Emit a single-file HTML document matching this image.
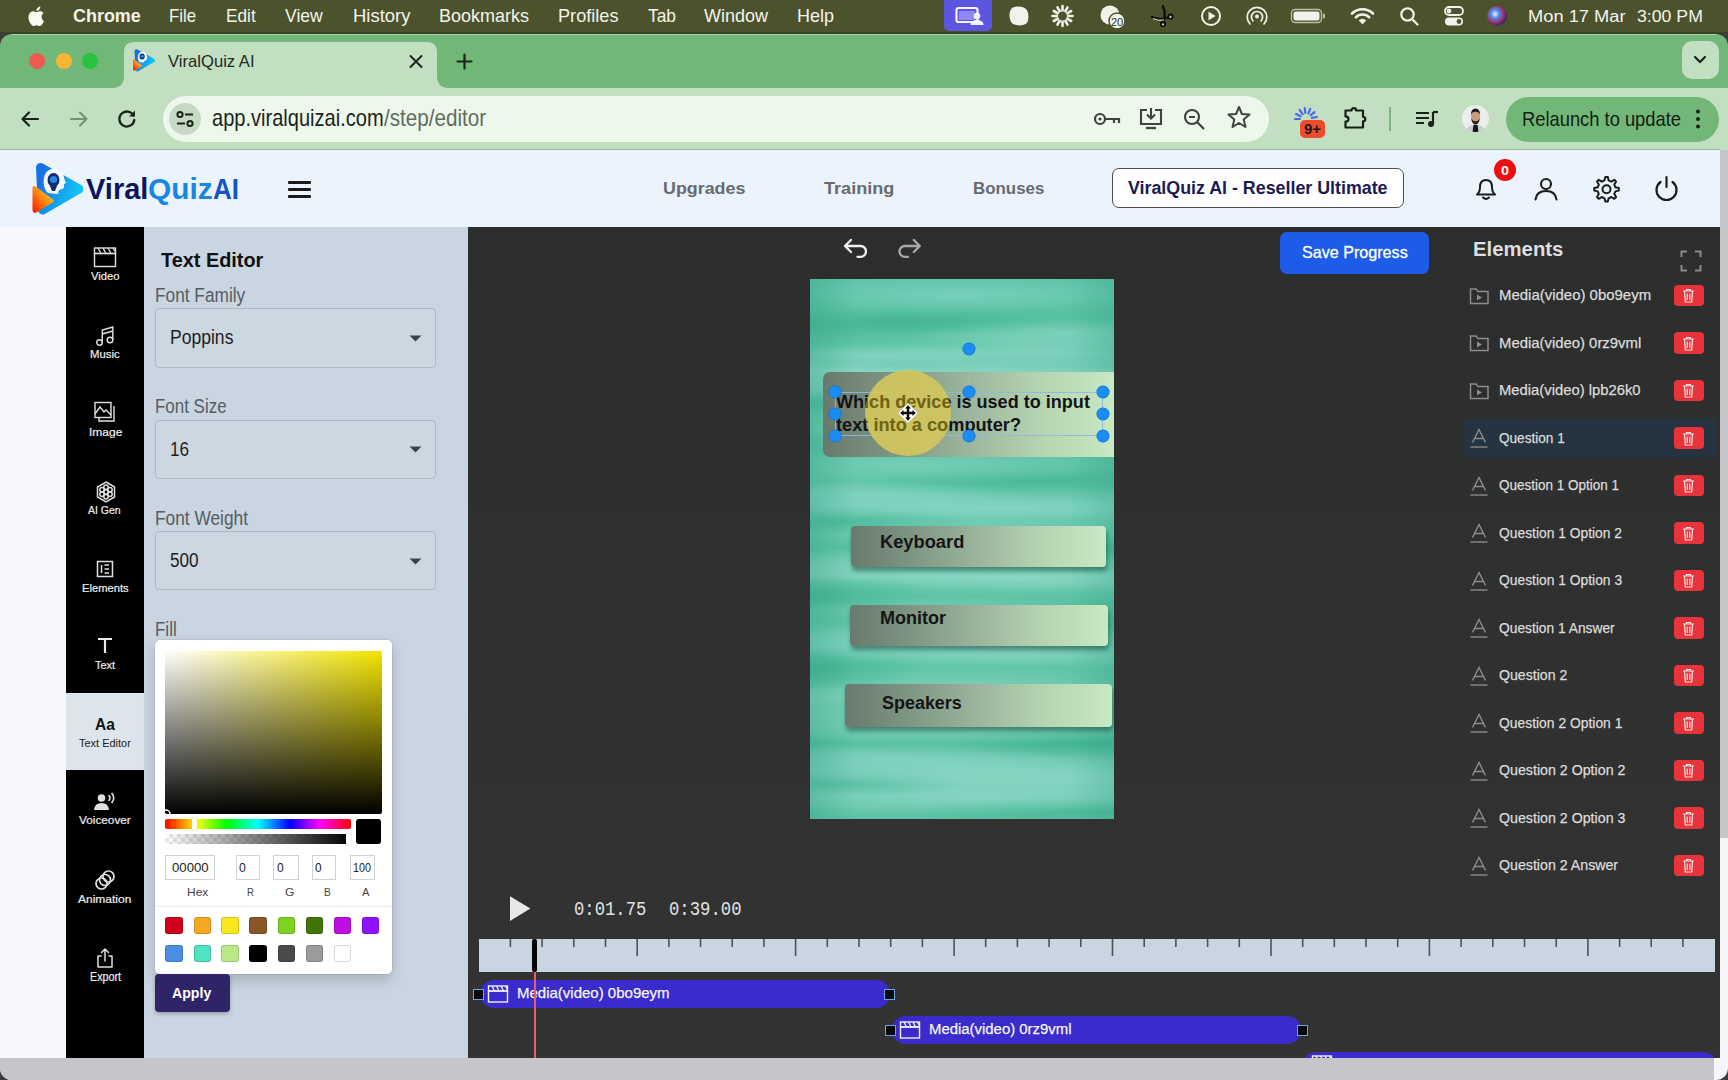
<!DOCTYPE html><html><head><meta charset="utf-8"><style>html,body{margin:0;padding:0;}body{width:1728px;height:1080px;overflow:hidden;position:relative;background:#3c3c3a;font-family:"Liberation Sans",sans-serif;}</style></head><body>
<div style="position:absolute;left:0px;top:0px;width:1728px;height:34px;background:#39412a;"></div>
<div style="position:absolute;left:0px;top:0px;width:1728px;height:32px;background:#4c532c;"></div>
<svg style="position:absolute;left:27px;top:5px;" width="20" height="22" viewBox="0 0 20 22"><path fill="#fafaf2" d="M14.6 11.7c0-2.4 2-3.5 2.1-3.6-1.1-1.7-2.9-1.9-3.5-1.9-1.5-.2-2.9.9-3.7.9-.8 0-1.9-.9-3.2-.8C4.7 6.3 3.1 7.3 2.3 8.8c-1.7 3-.4 7.4 1.2 9.8.8 1.2 1.8 2.5 3 2.4 1.2 0 1.7-.8 3.1-.8s1.9.8 3.2.8c1.3 0 2.1-1.2 2.9-2.4.9-1.3 1.3-2.6 1.3-2.7 0 0-2.4-1-2.4-4.2zM12.3 4.6c.7-.8 1.1-1.9 1-3-1 0-2.1.7-2.8 1.5-.6.7-1.2 1.8-1 2.9 1.1.1 2.1-.6 2.8-1.4z"/></svg>
<span id="t0" style="position:absolute;left:73.20px;top:7.49px;font-size:18.31px;line-height:18.31px;font-family:'Liberation Sans', sans-serif;font-weight:700;color:#f4f4ec;white-space:pre;transform:scaleX(0.9806);transform-origin:0 0;">Chrome</span>
<span id="t1" style="position:absolute;left:169.30px;top:7.49px;font-size:18.31px;line-height:18.31px;font-family:'Liberation Sans', sans-serif;font-weight:400;color:#f4f4ec;white-space:pre;transform:scaleX(0.9191);transform-origin:0 0;">File</span>
<span id="t2" style="position:absolute;left:226.00px;top:7.49px;font-size:18.31px;line-height:18.31px;font-family:'Liberation Sans', sans-serif;font-weight:400;color:#f4f4ec;white-space:pre;transform:scaleX(0.9419);transform-origin:0 0;">Edit</span>
<span id="t3" style="position:absolute;left:285.40px;top:7.49px;font-size:18.31px;line-height:18.31px;font-family:'Liberation Sans', sans-serif;font-weight:400;color:#f4f4ec;white-space:pre;transform:scaleX(0.9611);transform-origin:0 0;">View</span>
<span id="t4" style="position:absolute;left:352.50px;top:7.49px;font-size:18.31px;line-height:18.31px;font-family:'Liberation Sans', sans-serif;font-weight:400;color:#f4f4ec;white-space:pre;transform:scaleX(1.0099);transform-origin:0 0;">History</span>
<span id="t5" style="position:absolute;left:439.00px;top:7.49px;font-size:18.31px;line-height:18.31px;font-family:'Liberation Sans', sans-serif;font-weight:400;color:#f4f4ec;white-space:pre;transform:scaleX(0.9834);transform-origin:0 0;">Bookmarks</span>
<span id="t6" style="position:absolute;left:558.00px;top:7.49px;font-size:18.31px;line-height:18.31px;font-family:'Liberation Sans', sans-serif;font-weight:400;color:#f4f4ec;white-space:pre;transform:scaleX(0.9915);transform-origin:0 0;">Profiles</span>
<span id="t7" style="position:absolute;left:647.50px;top:7.49px;font-size:18.31px;line-height:18.31px;font-family:'Liberation Sans', sans-serif;font-weight:400;color:#f4f4ec;white-space:pre;transform:scaleX(0.9492);transform-origin:0 0;">Tab</span>
<span id="t8" style="position:absolute;left:704.00px;top:7.49px;font-size:18.31px;line-height:18.31px;font-family:'Liberation Sans', sans-serif;font-weight:400;color:#f4f4ec;white-space:pre;transform:scaleX(0.9834);transform-origin:0 0;">Window</span>
<span id="t9" style="position:absolute;left:796.50px;top:7.49px;font-size:18.31px;line-height:18.31px;font-family:'Liberation Sans', sans-serif;font-weight:400;color:#f4f4ec;white-space:pre;transform:scaleX(0.9830);transform-origin:0 0;">Help</span>
<div style="position:absolute;left:944px;top:0px;width:48px;height:31px;background:#5b55e0;border-radius:0 0 5px 5px;"></div>
<svg style="position:absolute;left:955px;top:6px;" width="30" height="20" viewBox="0 0 30 20"><rect x="1.5" y="2" width="21" height="14" rx="2" fill="none" stroke="#f4f2ff" stroke-width="2.2"/><rect x="4" y="5" width="16" height="9" fill="#8f88f0"/><circle cx="22" cy="10" r="3.3" fill="#f4f2ff"/><path d="M15.5 19c0-3.5 3-5 6.5-5s6.5 1.5 6.5 5z" fill="#f4f2ff"/></svg>
<svg style="position:absolute;left:1007px;top:5px;" width="24" height="22" viewBox="0 0 24 22"><path d="M5 3c4-2 10-2 14 1 3 3 3 10 1 14-3 3-10 3-14 1-4-3-5-12-1-16z" fill="#f2f2ea"/></svg>
<svg style="position:absolute;left:1050px;top:4px;" width="25" height="24" viewBox="0 0 25 24"><g stroke="#f2f2ea" stroke-width="2.6" stroke-linecap="round"><line x1="12.5" y1="12" x2="22.50" y2="12.00"/><line x1="12.5" y1="12" x2="21.16" y2="17.00"/><line x1="12.5" y1="12" x2="17.50" y2="20.66"/><line x1="12.5" y1="12" x2="12.50" y2="22.00"/><line x1="12.5" y1="12" x2="7.50" y2="20.66"/><line x1="12.5" y1="12" x2="3.84" y2="17.00"/><line x1="12.5" y1="12" x2="2.50" y2="12.00"/><line x1="12.5" y1="12" x2="3.84" y2="7.00"/><line x1="12.5" y1="12" x2="7.50" y2="3.34"/><line x1="12.5" y1="12" x2="12.50" y2="2.00"/><line x1="12.5" y1="12" x2="17.50" y2="3.34"/><line x1="12.5" y1="12" x2="21.16" y2="7.00"/></g><circle cx="12.5" cy="12" r="4.5" fill="#4c532c"/></svg>
<svg style="position:absolute;left:1099px;top:4px;" width="30" height="26" viewBox="0 0 30 26"><circle cx="11" cy="11" r="9.5" fill="#f2f2ea"/><circle cx="18" cy="17" r="8" fill="#f2f2ea" stroke="#4c532c" stroke-width="1.5"/><text x="18" y="21.5" font-size="11" text-anchor="middle" font-family="Liberation Sans" fill="#333">20</text></svg>
<svg style="position:absolute;left:1150px;top:4px;" width="26" height="26" viewBox="0 0 26 26"><path d="M13 2 Q15.5 8 14.5 14 L13.5 17" fill="none" stroke="#0c0c08" stroke-width="2.2" stroke-linecap="round"/><path d="M2 13 Q7 15.5 14 14.5 L18 13.5" fill="none" stroke="#0c0c08" stroke-width="2.2" stroke-linecap="round"/><circle cx="20.5" cy="12.5" r="2.2" fill="none" stroke="#0c0c08" stroke-width="1.8"/><circle cx="13" cy="20" r="2.2" fill="none" stroke="#0c0c08" stroke-width="1.8"/><circle cx="20.5" cy="13" r="1" fill="#e8e8d8"/><circle cx="13" cy="20.5" r="1" fill="#e8e8d8"/><path d="M3 14.5 Q8 17 14 16" fill="none" stroke="#e8e8d8" stroke-width="1"/></svg>
<svg style="position:absolute;left:1200px;top:5px;" width="24" height="22" viewBox="0 0 24 22"><circle cx="11" cy="11" r="9" fill="none" stroke="#f2f2ea" stroke-width="2"/><path d="M8.5 6.5 L15.5 11 L8.5 15.5z" fill="#f2f2ea"/></svg>
<svg style="position:absolute;left:1245px;top:4px;" width="24" height="24" viewBox="0 0 24 24"><g fill="none" stroke="#f2f2ea" stroke-width="1.7" stroke-linecap="round"><path d="M5 20 A9.8 9.8 0 1 1 19 20"/><path d="M8 17 A5.6 5.6 0 1 1 16 17"/></g><circle cx="12" cy="12.5" r="2" fill="#f2f2ea"/></svg>
<svg style="position:absolute;left:1290px;top:8px;" width="38" height="17" viewBox="0 0 38 17"><rect x="1.5" y="1.5" width="30" height="13" rx="3.5" fill="none" stroke="#b9bca8" stroke-width="1.4"/><rect x="3.5" y="3.5" width="26" height="9" rx="2" fill="#f2f2ea"/><rect x="33" y="5.5" width="2" height="5" rx="1" fill="#b9bca8"/></svg>
<svg style="position:absolute;left:1350px;top:6px;" width="25" height="20" viewBox="0 0 25 20"><g fill="none" stroke="#f2f2ea" stroke-width="2.6" stroke-linecap="round"><path d="M2 7.5a15 15 0 0 1 21 0"/><path d="M5.8 11.3a9.5 9.5 0 0 1 13.4 0"/></g><path d="M8.8 14.5a5 5 0 0 1 7.4 0L12.5 18.5z" fill="#f2f2ea"/></svg>
<svg style="position:absolute;left:1399px;top:6px;" width="22" height="22" viewBox="0 0 22 22"><circle cx="8.5" cy="8.5" r="6.2" fill="none" stroke="#f2f2ea" stroke-width="2.2"/><path d="M13 13 L18.5 18.5" stroke="#f2f2ea" stroke-width="2.4" stroke-linecap="round"/></svg>
<svg style="position:absolute;left:1443px;top:5px;" width="24" height="24" viewBox="0 0 24 24"><rect x="2" y="2" width="18" height="8" rx="4" fill="none" stroke="#f2f2ea" stroke-width="1.8"/><circle cx="6" cy="6" r="2.4" fill="#f2f2ea"/><rect x="2" y="12.5" width="18" height="8" rx="4" fill="#f2f2ea"/><circle cx="16" cy="16.5" r="2.4" fill="#4c532c"/></svg>
<svg style="position:absolute;left:1486px;top:5px;" width="22" height="22" viewBox="0 0 22 22"><defs><radialGradient id="siri" cx="40%" cy="40%" r="60%"><stop offset="0" stop-color="#e8f0ff"/><stop offset=".35" stop-color="#4a8ee8"/><stop offset=".7" stop-color="#a03070"/><stop offset="1" stop-color="#3a2a6a"/></radialGradient></defs><circle cx="11" cy="11" r="10" fill="url(#siri)"/></svg>
<span id="t10" style="position:absolute;left:1528.30px;top:7.86px;font-size:17.30px;line-height:17.30px;font-family:'Liberation Sans', sans-serif;font-weight:400;color:#f4f4ec;white-space:pre;transform:scaleX(1.0584);transform-origin:0 0;">Mon 17 Mar</span>
<span id="t11" style="position:absolute;left:1636.80px;top:7.86px;font-size:17.30px;line-height:17.30px;font-family:'Liberation Sans', sans-serif;font-weight:400;color:#f4f4ec;white-space:pre;transform:scaleX(1.0239);transform-origin:0 0;">3:00 PM</span>
<div style="position:absolute;left:0px;top:34px;width:1728px;height:1024px;background:#72b777;border-radius:12px 12px 0 0;"></div>
<div style="position:absolute;left:12px;top:34px;width:1704px;height:1px;background:rgba(170,225,170,.8);"></div>
<div style="position:absolute;left:28.5px;top:53px;width:16px;height:16px;border-radius:50%;background:#ee5a52;"></div>
<div style="position:absolute;left:55.5px;top:53px;width:16px;height:16px;border-radius:50%;background:#f5b732;"></div>
<div style="position:absolute;left:82px;top:53px;width:16px;height:16px;border-radius:50%;background:#28c33e;"></div>
<svg style="position:absolute;left:112px;top:42px;" width="340" height="46" viewBox="0 0 340 46"><path d="M0 46 Q12 46 12 34 V10 Q12 0 22 0 H315 Q325 0 325 10 V34 Q325 46 337 46 Z" fill="#c2dfc2"/></svg>
<svg style="position:absolute;left:131px;top:47px;" width="27" height="26" viewBox="4 2 62 60"><defs><linearGradient id="flb" x1="0" y1="0.2" x2="1" y2="0.6"><stop offset="0" stop-color="#1670e6"/><stop offset="1" stop-color="#12c6f2"/></linearGradient><linearGradient id="flo" x1="1" y1="0" x2="0" y2="1"><stop offset="0" stop-color="#ffe61a"/><stop offset=".5" stop-color="#ff8a10"/><stop offset="1" stop-color="#ff1200"/></linearGradient></defs><path d="M16.5 11.5 L55 33 L18.5 54z" fill="url(#flb)" stroke="url(#flb)" stroke-width="9" stroke-linejoin="round"/><path d="M24 37 C20 33 19 27 20 22 C21 15 27 12 32 13 C37 14 40 18 40 22 L42 27 L40 28 L40 31 C40 33 37 33 35 34 L34 38z" fill="#f6f9ff"/><ellipse cx="29.5" cy="24" rx="6" ry="7" fill="#0b2c70"/><circle cx="29.5" cy="23.5" r="3.6" fill="#2a86e2"/><path d="M11 30 Q8 29.5 8.5 33 L8.5 54 Q9 58.5 13 56 L28.5 46.5 Q31 45 28.5 43.3z" fill="url(#flo)"/></svg>
<span id="t12" style="position:absolute;left:168.00px;top:54.37px;font-size:16.57px;line-height:16.57px;font-family:'Liberation Sans', sans-serif;font-weight:400;color:#1d2a1e;white-space:pre;transform:scaleX(1.0042);transform-origin:0 0;">ViralQuiz AI</span>
<svg style="position:absolute;left:408px;top:54px;" width="16" height="15" viewBox="0 0 16 15"><path d="M2.5 2 L13.5 13 M13.5 2 L2.5 13" stroke="#1b241b" stroke-width="2" stroke-linecap="round"/></svg>
<svg style="position:absolute;left:456px;top:53px;" width="17" height="17" viewBox="0 0 17 17"><path d="M8.5 1.5 V15.5 M1.5 8.5 H15.5" stroke="#1b241b" stroke-width="2.2" stroke-linecap="round"/></svg>
<div style="position:absolute;left:1682px;top:41px;width:37px;height:38px;background:#c2dfc2;border-radius:10px;"></div>
<svg style="position:absolute;left:1691px;top:53px;" width="18" height="14" viewBox="0 0 18 14"><path d="M4 4 L9 9 L14 4" fill="none" stroke="#1b241b" stroke-width="2.2" stroke-linecap="round" stroke-linejoin="round"/></svg>
<div style="position:absolute;left:0px;top:88px;width:1728px;height:62px;background:#c2dfc2;"></div>
<div style="position:absolute;left:0px;top:149px;width:1720px;height:1px;background:#9fb99f;"></div>
<svg style="position:absolute;left:19px;top:108px;" width="22" height="22" viewBox="0 0 22 22"><path d="M19 11 H4 M10 4.5 L3.5 11 L10 17.5" fill="none" stroke="#1b241b" stroke-width="2.2" stroke-linecap="round" stroke-linejoin="round"/></svg>
<svg style="position:absolute;left:68px;top:108px;" width="22" height="22" viewBox="0 0 22 22"><path d="M3 11 H18 M12 4.5 L18.5 11 L12 17.5" fill="none" stroke="#6f936f" stroke-width="2.1" stroke-linecap="round" stroke-linejoin="round"/></svg>
<svg style="position:absolute;left:116px;top:107px;" width="22" height="22" viewBox="0 0 22 22"><path d="M17.5 8.5 A7.5 7.5 0 1 0 18.3 13" fill="none" stroke="#1b241b" stroke-width="2.3" stroke-linecap="round"/><path d="M19 3.5 V9.5 H13z" fill="#1b241b"/></svg>
<div style="position:absolute;left:163px;top:96px;width:1106px;height:46px;background:#eef7eb;border-radius:23px;"></div>
<div style="position:absolute;left:169px;top:103px;width:32px;height:32px;background:#c5d9c3;border-radius:50%;"></div>
<svg style="position:absolute;left:173px;top:107px;" width="24" height="24" viewBox="0 0 24 24"><g fill="none" stroke="#1b241b" stroke-width="2"><circle cx="7" cy="7.5" r="2.6"/><circle cx="17" cy="16.5" r="2.6"/><path d="M12 7.5 H20 M4 16.5 H12"/></g></svg>
<span id="t13" style="position:absolute;left:212.40px;top:107.49px;font-size:23.40px;line-height:23.40px;font-family:'Liberation Sans', sans-serif;font-weight:400;color:#1b241b;white-space:pre;transform:scaleX(0.8571);transform-origin:0 0;">app.viralquizai.com</span>
<span id="t14" style="position:absolute;left:384.00px;top:107.49px;font-size:23.40px;line-height:23.40px;font-family:'Liberation Sans', sans-serif;font-weight:400;color:#5f6e5f;white-space:pre;transform:scaleX(0.8831);transform-origin:0 0;">/step/editor</span>
<svg style="position:absolute;left:1093px;top:108px;" width="30" height="22" viewBox="0 0 30 22"><circle cx="7" cy="11" r="5" fill="none" stroke="#3a463a" stroke-width="2.2"/><circle cx="7" cy="11" r="1.6" fill="#3a463a"/><path d="M12 11 H26 V15 M21 11 V15" fill="none" stroke="#3a463a" stroke-width="2.2"/></svg>
<svg style="position:absolute;left:1138px;top:105px;" width="28" height="28" viewBox="0 0 28 28"><path d="M9 5 H3 V19 H23 V5 H17" fill="none" stroke="#3a463a" stroke-width="2.1"/><path d="M13 3 V13 M9 9.5 L13 13.5 L17 9.5" fill="none" stroke="#3a463a" stroke-width="2.1"/><path d="M8 23 H18" stroke="#3a463a" stroke-width="2.3"/></svg>
<svg style="position:absolute;left:1181px;top:106px;" width="28" height="28" viewBox="0 0 28 28"><circle cx="11" cy="11" r="7" fill="none" stroke="#3a463a" stroke-width="2.1"/><path d="M8 11 H14 M16 16 L23 23" stroke="#3a463a" stroke-width="2.2"/></svg>
<svg style="position:absolute;left:1225px;top:104px;" width="28" height="28" viewBox="0 0 28 28"><path d="M14 3 L16.9 10 L24.5 10.6 L18.7 15.5 L20.5 23 L14 19 L7.5 23 L9.3 15.5 L3.5 10.6 L11.1 10z" fill="none" stroke="#3a463a" stroke-width="2" stroke-linejoin="round"/></svg>
<svg style="position:absolute;left:1292px;top:104px;" width="36" height="36" viewBox="0 0 36 36"><g stroke="#4a6ae8" stroke-width="2.2" stroke-linecap="round"><line x1="8.0" y1="15.0" x2="3.0" y2="15.0"/><line x1="8.6" y1="12.3" x2="4.1" y2="10.1"/><line x1="10.6" y1="10.1" x2="7.7" y2="6.0"/><line x1="13.3" y1="9.0" x2="12.8" y2="4.1"/><line x1="16.3" y1="9.4" x2="18.2" y2="4.8"/><line x1="18.7" y1="11.2" x2="22.5" y2="8.1"/><line x1="19.9" y1="13.9" x2="24.8" y2="13.0"/></g></svg>
<div style="position:absolute;left:1300px;top:120px;width:25px;height:18px;background:#ef4a2a;border-radius:5px;"></div>
<span id="t15" style="position:absolute;left:1304.00px;top:121.69px;font-size:14.53px;line-height:14.53px;font-family:'Liberation Sans', sans-serif;font-weight:700;color:#1a1a1a;white-space:pre;transform:scaleX(1.0264);transform-origin:0 0;">9+</span>
<svg style="position:absolute;left:1341px;top:103px;" width="30" height="30" viewBox="0 0 30 30"><path d="M4.5 7.5 H10.5 A2.3 2.3 0 0 1 15.1 7.5 H22 V13.8 A2.3 2.3 0 0 1 22 18.4 V24.5 H4.5 V18.6 Q7.5 18.6 7.5 16 Q7.5 13.4 4.5 13.4 Z" fill="none" stroke="#152015" stroke-width="2.2" stroke-linejoin="round"/></svg>
<div style="position:absolute;left:1389px;top:107px;width:2px;height:24px;background:#7fb47f;"></div>
<svg style="position:absolute;left:1414px;top:108px;" width="28" height="22" viewBox="0 0 28 22"><path d="M2 5 H15 M2 10 H15 M2 15 H10" stroke="#1b241b" stroke-width="2.2"/><path d="M19 4 V16" stroke="#1b241b" stroke-width="2.2"/><path d="M19 4 H24" stroke="#1b241b" stroke-width="2.2"/><circle cx="17" cy="16" r="3" fill="#1b241b"/></svg>
<div style="position:absolute;left:1462px;top:105px;width:27px;height:27px;background:#d8dcd8;border-radius:50%;overflow:hidden;"></div>
<svg style="position:absolute;left:1462px;top:105px;border-radius:50%;" width="27" height="27" viewBox="0 0 27 27"><rect width="27" height="27" fill="#eceeed"/><path d="M3 27 Q5 20 13.5 19.5 Q22 20 24 27z" fill="#c9cdd0"/><path d="M10.5 27 L11.5 20 H15.5 L16.5 27z" fill="#151515"/><ellipse cx="13.5" cy="12" rx="4.6" ry="6" fill="#c79a7c"/><path d="M8.8 10 Q9 3.5 13.5 3.5 Q18 3.5 18.2 10 Q16.5 6.5 13.5 6.8 Q10.5 6.5 8.8 10z" fill="#1d1a18"/><path d="M9.2 13.5 Q10 19.5 13.5 19.5 Q17 19.5 17.8 13.5 Q16 16.5 13.5 16.2 Q11 16.5 9.2 13.5z" fill="#2a2220"/></svg>
<div style="position:absolute;left:1506px;top:97px;width:213px;height:45px;background:#72b777;border-radius:23px;"></div>
<span id="t16" style="position:absolute;left:1521.70px;top:109.40px;font-size:20.78px;line-height:20.78px;font-family:'Liberation Sans', sans-serif;font-weight:400;color:#132013;white-space:pre;transform:scaleX(0.8828);transform-origin:0 0;">Relaunch to update</span>
<svg style="position:absolute;left:1693px;top:108px;" width="10" height="22" viewBox="0 0 10 22"><circle cx="5" cy="3.5" r="2" fill="#132013"/><circle cx="5" cy="11" r="2" fill="#132013"/><circle cx="5" cy="18.5" r="2" fill="#132013"/></svg>
<div style="position:absolute;left:0px;top:150px;width:1720px;height:77px;background:#ebf3fc;"></div>
<svg style="position:absolute;left:24px;top:156px;" width="68" height="64" viewBox="0 0 68 64"><defs><linearGradient id="lgb" x1="0" y1="0.2" x2="1" y2="0.6"><stop offset="0" stop-color="#1670e6"/><stop offset="1" stop-color="#12c6f2"/></linearGradient><linearGradient id="lgo" x1="1" y1="0" x2="0" y2="1"><stop offset="0" stop-color="#ffe61a"/><stop offset=".5" stop-color="#ff8a10"/><stop offset="1" stop-color="#ff1200"/></linearGradient></defs><path d="M16.5 11.5 L55 33 L18.5 54z" fill="url(#lgb)" stroke="url(#lgb)" stroke-width="9" stroke-linejoin="round"/><path d="M24 37 C20 33 19 27 20 22 C21 15 27 12 32 13 C37 14 40 18 40 22 L42 27 L40 28 L40 31 C40 33 37 33 35 34 L34 38z" fill="#f6f9ff"/><ellipse cx="29.5" cy="24" rx="6" ry="7" fill="#0b2c70"/><path d="M26 30 L33 30 L31 35 L28 35z" fill="#0b2c70"/><circle cx="29.5" cy="23.5" r="3.6" fill="#2a86e2"/><path d="M11 30 Q8 29.5 8.5 33 L8.5 54 Q9 58.5 13 56 L28.5 46.5 Q31 45 28.5 43.3z" fill="url(#lgo)"/></svg>
<span id="t17" style="position:absolute;left:86.00px;top:175.39px;font-size:29.07px;line-height:29.07px;font-family:'Liberation Sans', sans-serif;font-weight:700;color:#0e1560;white-space:pre;transform:scaleX(0.9986);transform-origin:0 0;">Viral</span>
<span id="t18" style="position:absolute;left:148.40px;top:175.39px;font-size:29.07px;line-height:29.07px;font-family:'Liberation Sans', sans-serif;font-weight:700;color:#1a86e4;white-space:pre;transform:scaleX(1.0259);transform-origin:0 0;">Quiz</span>
<span id="t19" style="position:absolute;left:213.00px;top:175.39px;font-size:29.07px;line-height:29.07px;font-family:'Liberation Sans', sans-serif;font-weight:700;color:#1654c4;white-space:pre;transform:scaleX(0.8946);transform-origin:0 0;">AI</span>
<div style="position:absolute;left:288px;top:181px;width:23px;height:2.6px;background:#1a1a1a;border-radius:1px;"></div>
<div style="position:absolute;left:288px;top:188px;width:23px;height:2.6px;background:#1a1a1a;border-radius:1px;"></div>
<div style="position:absolute;left:288px;top:195px;width:23px;height:2.6px;background:#1a1a1a;border-radius:1px;"></div>
<span id="t20" style="position:absolute;left:662.60px;top:179.86px;font-size:17.30px;line-height:17.30px;font-family:'Liberation Sans', sans-serif;font-weight:700;color:#676b70;white-space:pre;transform:scaleX(1.0336);transform-origin:0 0;">Upgrades</span>
<span id="t21" style="position:absolute;left:823.60px;top:179.86px;font-size:17.30px;line-height:17.30px;font-family:'Liberation Sans', sans-serif;font-weight:700;color:#676b70;white-space:pre;transform:scaleX(1.0473);transform-origin:0 0;">Training</span>
<span id="t22" style="position:absolute;left:972.70px;top:179.86px;font-size:17.30px;line-height:17.30px;font-family:'Liberation Sans', sans-serif;font-weight:700;color:#676b70;white-space:pre;transform:scaleX(0.9769);transform-origin:0 0;">Bonuses</span>
<div style="position:absolute;left:1112px;top:168px;width:292px;height:40px;background:#ffffff;box-sizing:border-box;border:1.5px solid #4d4d52;border-radius:7px;"></div>
<span id="t23" style="position:absolute;left:1128.00px;top:179.93px;font-size:17.44px;line-height:17.44px;font-family:'Liberation Sans', sans-serif;font-weight:700;color:#1a1a55;white-space:pre;transform:scaleX(1.0220);transform-origin:0 0;">ViralQuiz AI - Reseller Ultimate</span>
<svg style="position:absolute;left:1472px;top:175px;" width="28" height="28" viewBox="0 0 28 28"><path d="M5 19.5 Q8 17 8 12 Q8 5 14 5 Q20 5 20 12 Q20 17 23 19.5z" fill="none" stroke="#1c1c1c" stroke-width="2" stroke-linejoin="round"/><path d="M11 22.5 Q14 25.5 17 22.5" fill="none" stroke="#1c1c1c" stroke-width="2" stroke-linecap="round"/></svg>
<div style="position:absolute;left:1493.5px;top:159px;width:22px;height:22px;border-radius:50%;background:#ee0e12;"></div>
<span id="t24" style="position:absolute;left:1500.50px;top:165.04px;font-size:12.35px;line-height:12.35px;font-family:'Liberation Sans', sans-serif;font-weight:700;color:#ffffff;white-space:pre;transform:scaleX(1.1636);transform-origin:0 0;">0</span>
<svg style="position:absolute;left:1532px;top:175px;" width="28" height="28" viewBox="0 0 28 28"><circle cx="14" cy="9" r="5" fill="none" stroke="#1c1c1c" stroke-width="2.1"/><path d="M3.5 24.5 Q4.5 16 14 16 Q23.5 16 24.5 24.5" fill="none" stroke="#1c1c1c" stroke-width="2.1" stroke-linecap="round"/></svg>
<svg style="position:absolute;left:1592px;top:175px;" width="29" height="29" viewBox="0 0 29 29"><path d="M14.5 3 L17 3 L17.8 6.3 L20.5 7.6 L23.5 5.8 L25.3 7.6 L23.5 10.6 L24.6 13.3 L28 14 L28 16.6 L24.6 17.4 L23.5 20 L25.3 23 L23.5 24.8 L20.5 23 L17.8 24.3 L17 27.6 L14.5 27.6 L13.7 24.3 L11 23 L8 24.8 L6.2 23 L8 20 L6.9 17.4 L3.5 16.6 L3.5 14 L6.9 13.3 L8 10.6 L6.2 7.6 L8 5.8 L11 7.6 L13.7 6.3z" fill="none" stroke="#1c1c1c" stroke-width="2" stroke-linejoin="round" transform="translate(-1.2,-1)"/><circle cx="14.5" cy="14.3" r="4" fill="none" stroke="#1c1c1c" stroke-width="2"/></svg>
<svg style="position:absolute;left:1652px;top:174px;" width="29" height="29" viewBox="0 0 29 29"><path d="M8.5 8 A10 10 0 1 0 20.5 8" fill="none" stroke="#1c1c1c" stroke-width="2.2" stroke-linecap="round"/><path d="M14.5 3 V13" stroke="#1c1c1c" stroke-width="2.2" stroke-linecap="round"/></svg>
<div style="position:absolute;left:0px;top:227px;width:66px;height:831px;background:#f7f7fc;"></div>
<div style="position:absolute;left:66px;top:227px;width:78px;height:831px;background:#000000;"></div>
<div style="position:absolute;left:144px;top:227px;width:324px;height:831px;background:#c9d5e1;"></div>
<div style="position:absolute;left:468px;top:227px;width:1252px;height:831px;background:linear-gradient(to bottom,#2c2d2d,#333333);"></div>
<div style="position:absolute;left:1720px;top:150px;width:8px;height:908px;background:#f6f6fa;"></div>
<div style="position:absolute;left:1720px;top:150px;width:8px;height:688px;background:#c6c5ca;"></div>
<div style="position:absolute;left:0px;top:1058px;width:1728px;height:22px;background:#f6f6fa;border-radius:0 0 12px 12px;"></div>
<div style="position:absolute;left:0px;top:1058px;width:1714px;height:22px;background:#c6c5ca;border-radius:0 0 0 12px;"></div>
<div style="position:absolute;left:66px;top:693px;width:78px;height:77px;background:#dde4ec;"></div>
<svg style="position:absolute;left:92px;top:246px;" width="26" height="22" viewBox="0 0 26 22"><g fill="none" stroke="#e0e0e0" stroke-width="1.4"><rect x="2.5" y="7.5" width="21" height="13"/><rect x="2.5" y="2" width="21" height="5.5"/><path d="M6 2 L9 7.5 M11 2 L14 7.5 M16 2 L19 7.5 M21 2 L23.5 6"/></g></svg>
<span id="t25" style="position:absolute;left:90.80px;top:270.72px;font-size:11.19px;line-height:11.19px;font-family:'Liberation Sans', sans-serif;font-weight:400;color:#ececec;white-space:pre;transform:scaleX(1.0063);transform-origin:0 0;-webkit-text-stroke:0.2px #ececec;">Video</span>
<svg style="position:absolute;left:93px;top:325px;" width="24" height="22" viewBox="0 0 24 22"><g fill="none" stroke="#e0e0e0" stroke-width="1.4"><circle cx="6.5" cy="17.5" r="2.8"/><circle cx="17" cy="15" r="2.8"/><path d="M9.3 17.5 V5 L19.8 2 V15"/><path d="M9.3 9 L19.8 6"/></g></svg>
<span id="t26" style="position:absolute;left:90.20px;top:349.18px;font-size:11.48px;line-height:11.48px;font-family:'Liberation Sans', sans-serif;font-weight:400;color:#ececec;white-space:pre;transform:scaleX(0.9882);transform-origin:0 0;-webkit-text-stroke:0.2px #ececec;">Music</span>
<svg style="position:absolute;left:92px;top:400px;" width="26" height="24" viewBox="0 0 26 24"><g fill="none" stroke="#e0e0e0" stroke-width="1.4"><rect x="3" y="2.5" width="16" height="15"/><path d="M3 14 L8 7 L12 12 L14 10 L19 15"/><path d="M22 6 V21 H7 V18"/></g></svg>
<span id="t27" style="position:absolute;left:88.50px;top:427.37px;font-size:10.90px;line-height:10.90px;font-family:'Liberation Sans', sans-serif;font-weight:400;color:#ececec;white-space:pre;transform:scaleX(1.1030);transform-origin:0 0;-webkit-text-stroke:0.2px #ececec;">Image</span>
<svg style="position:absolute;left:94px;top:480px;" width="24" height="24" viewBox="0 0 24 24"><g fill="none" stroke="#e0e0e0" stroke-width="1.5"><path d="M12 2 L20.5 7 V17 L12 22 L3.5 17 V7z"/><circle cx="12" cy="12" r="2.2"/><circle cx="12" cy="7.3" r="2.2"/><circle cx="12" cy="16.7" r="2.2"/><circle cx="8" cy="9.7" r="2.2"/><circle cx="16" cy="9.7" r="2.2"/><circle cx="8" cy="14.3" r="2.2"/><circle cx="16" cy="14.3" r="2.2"/></g></svg>
<span id="t28" style="position:absolute;left:88.40px;top:505.45px;font-size:11.05px;line-height:11.05px;font-family:'Liberation Sans', sans-serif;font-weight:400;color:#ececec;white-space:pre;transform:scaleX(0.9479);transform-origin:0 0;-webkit-text-stroke:0.2px #ececec;">AI Gen</span>
<svg style="position:absolute;left:96px;top:560px;" width="18" height="18" viewBox="0 0 18 18"><g fill="none" stroke="#e0e0e0" stroke-width="1.5"><rect x="1.5" y="1.5" width="15" height="15"/><path d="M5.5 5 V13 M8.5 5 H13 M8.5 9 H13 M8.5 13 H13"/></g></svg>
<span id="t29" style="position:absolute;left:81.60px;top:583.25px;font-size:11.05px;line-height:11.05px;font-family:'Liberation Sans', sans-serif;font-weight:400;color:#ececec;white-space:pre;transform:scaleX(1.0117);transform-origin:0 0;-webkit-text-stroke:0.2px #ececec;">Elements</span>
<svg style="position:absolute;left:97px;top:637px;" width="16" height="18" viewBox="0 0 16 18"><path d="M1 2 H15 M8 2 V16" stroke="#e8e8e8" stroke-width="2.2"/></svg>
<span id="t30" style="position:absolute;left:94.90px;top:660.18px;font-size:11.48px;line-height:11.48px;font-family:'Liberation Sans', sans-serif;font-weight:400;color:#ececec;white-space:pre;transform:scaleX(0.9550);transform-origin:0 0;-webkit-text-stroke:0.2px #ececec;">Text</span>
<span id="t31" style="position:absolute;left:95.00px;top:715.76px;font-size:17.30px;line-height:17.30px;font-family:'Liberation Sans', sans-serif;font-weight:700;color:#111111;white-space:pre;transform:scaleX(0.8962);transform-origin:0 0;">Aa</span>
<span id="t32" style="position:absolute;left:79.30px;top:737.59px;font-size:10.76px;line-height:10.76px;font-family:'Liberation Sans', sans-serif;font-weight:400;color:#222222;white-space:pre;transform:scaleX(1.0197);transform-origin:0 0;">Text Editor</span>
<svg style="position:absolute;left:93px;top:792px;" width="24" height="20" viewBox="0 0 24 20"><circle cx="8.5" cy="6" r="3.8" fill="#e0e0e0"/><path d="M1 18 Q1.5 11 8.5 11 Q15.5 11 16 18z" fill="#e0e0e0"/><path d="M16 3.5 Q18 6 16 8.5 M19 1.5 Q22.5 6 19 10.5" fill="none" stroke="#e0e0e0" stroke-width="1.6" stroke-linecap="round"/></svg>
<span id="t33" style="position:absolute;left:79.30px;top:814.45px;font-size:11.63px;line-height:11.63px;font-family:'Liberation Sans', sans-serif;font-weight:400;color:#ececec;white-space:pre;transform:scaleX(1.0144);transform-origin:0 0;-webkit-text-stroke:0.2px #ececec;">Voiceover</span>
<svg style="position:absolute;left:94px;top:869px;" width="22" height="22" viewBox="0 0 22 22"><g fill="none" stroke="#e0e0e0" stroke-width="1.7"><circle cx="7.5" cy="14.5" r="5.5"/><circle cx="11" cy="11" r="5.5"/><circle cx="14.5" cy="7.5" r="5.5"/></g></svg>
<span id="t34" style="position:absolute;left:78.40px;top:892.95px;font-size:11.63px;line-height:11.63px;font-family:'Liberation Sans', sans-serif;font-weight:400;color:#ececec;white-space:pre;transform:scaleX(1.0309);transform-origin:0 0;-webkit-text-stroke:0.2px #ececec;">Animation</span>
<svg style="position:absolute;left:95px;top:947px;" width="20" height="22" viewBox="0 0 20 22"><g fill="none" stroke="#e0e0e0" stroke-width="1.5" stroke-linecap="round" stroke-linejoin="round"><path d="M6 9 H3 V20 H17 V9 H14"/><path d="M10 2 V14 M6.5 5.5 L10 2 L13.5 5.5"/></g></svg>
<span id="t35" style="position:absolute;left:89.60px;top:972.01px;font-size:11.92px;line-height:11.92px;font-family:'Liberation Sans', sans-serif;font-weight:400;color:#ececec;white-space:pre;transform:scaleX(0.9035);transform-origin:0 0;-webkit-text-stroke:0.2px #ececec;">Export</span>
<span id="t36" style="position:absolute;left:161.40px;top:248.56px;font-size:21.08px;line-height:21.08px;font-family:'Liberation Sans', sans-serif;font-weight:700;color:#111111;white-space:pre;transform:scaleX(0.9426);transform-origin:0 0;">Text Editor</span>
<span id="t37" style="position:absolute;left:154.80px;top:285.84px;font-size:19.91px;line-height:19.91px;font-family:'Liberation Sans', sans-serif;font-weight:400;color:#565c63;white-space:pre;transform:scaleX(0.8674);transform-origin:0 0;">Font Family</span>
<span id="t38" style="position:absolute;left:154.80px;top:396.56px;font-size:19.77px;line-height:19.77px;font-family:'Liberation Sans', sans-serif;font-weight:400;color:#565c63;white-space:pre;transform:scaleX(0.8575);transform-origin:0 0;">Font Size</span>
<span id="t39" style="position:absolute;left:154.80px;top:507.77px;font-size:20.35px;line-height:20.35px;font-family:'Liberation Sans', sans-serif;font-weight:400;color:#565c63;white-space:pre;transform:scaleX(0.8508);transform-origin:0 0;">Font Weight</span>
<span id="t40" style="position:absolute;left:154.80px;top:619.64px;font-size:19.91px;line-height:19.91px;font-family:'Liberation Sans', sans-serif;font-weight:400;color:#565c63;white-space:pre;transform:scaleX(0.8531);transform-origin:0 0;">Fill</span>
<div style="position:absolute;left:154.8px;top:308.3px;width:281.6px;height:59.5px;background:#ccd7e2;box-sizing:border-box;border:1px solid #aeb9c5;border-radius:4px;"></div>
<svg style="position:absolute;left:409px;top:334.8px;" width="13" height="7" viewBox="0 0 13 7"><path d="M0.5 0.5 H12.5 L6.5 6.5z" fill="#3c4248"/></svg>
<div style="position:absolute;left:154.8px;top:419.5px;width:281.6px;height:59.10000000000002px;background:#ccd7e2;box-sizing:border-box;border:1px solid #aeb9c5;border-radius:4px;"></div>
<svg style="position:absolute;left:409px;top:446.0px;" width="13" height="7" viewBox="0 0 13 7"><path d="M0.5 0.5 H12.5 L6.5 6.5z" fill="#3c4248"/></svg>
<div style="position:absolute;left:154.8px;top:531px;width:281.6px;height:59px;background:#ccd7e2;box-sizing:border-box;border:1px solid #aeb9c5;border-radius:4px;"></div>
<svg style="position:absolute;left:409px;top:557.5px;" width="13" height="7" viewBox="0 0 13 7"><path d="M0.5 0.5 H12.5 L6.5 6.5z" fill="#3c4248"/></svg>
<span id="t41" style="position:absolute;left:170.00px;top:325.66px;font-size:21.08px;line-height:21.08px;font-family:'Liberation Sans', sans-serif;font-weight:400;color:#1e1e1e;white-space:pre;transform:scaleX(0.8323);transform-origin:0 0;">Poppins</span>
<span id="t42" style="position:absolute;left:170.40px;top:439.47px;font-size:20.35px;line-height:20.35px;font-family:'Liberation Sans', sans-serif;font-weight:400;color:#1e1e1e;white-space:pre;transform:scaleX(0.8392);transform-origin:0 0;">16</span>
<span id="t43" style="position:absolute;left:170.40px;top:549.77px;font-size:20.35px;line-height:20.35px;font-family:'Liberation Sans', sans-serif;font-weight:400;color:#1e1e1e;white-space:pre;transform:scaleX(0.8423);transform-origin:0 0;">500</span>
<div style="position:absolute;left:154.6px;top:640.4px;width:237.4px;height:333.2px;background:#ffffff;border-radius:5px;box-shadow:0 0 0 1px rgba(0,0,0,.06),0 6px 14px rgba(0,0,0,.18);"></div>
<div style="position:absolute;left:165.2px;top:651px;width:216.4px;height:162.9px;background:linear-gradient(to top,#000,rgba(0,0,0,0)),linear-gradient(to right,#fff,#f2e400);border-radius:2px;"></div>
<svg style="position:absolute;left:160px;top:808px;" width="12" height="12" viewBox="0 0 12 12"><circle cx="6" cy="6" r="4" fill="none" stroke="#fff" stroke-width="1.5"/></svg>
<div style="position:absolute;left:165.3px;top:818.7px;width:185.8px;height:10.8px;background:linear-gradient(to right,#f00 0%,#ff0 17%,#0f0 33%,#0ff 50%,#00f 67%,#f0f 83%,#f00 100%);border-radius:2px;"></div>
<div style="position:absolute;left:191.8px;top:818px;width:5px;height:12px;background:#ffffff;border-radius:1px;box-shadow:0 0 1px rgba(0,0,0,.6);"></div>
<div style="position:absolute;left:165.3px;top:833.6px;width:185.8px;height:10.6px;background:linear-gradient(to right,rgba(0,0,0,0),#000),repeating-conic-gradient(#e8e8e8 0 25%,#fff 0 50%) 0 0/8px 8px;border-radius:2px;"></div>
<div style="position:absolute;left:345.6px;top:833px;width:5px;height:12px;background:#ffffff;border-radius:1px;box-shadow:0 0 1px rgba(0,0,0,.6);"></div>
<div style="position:absolute;left:355.8px;top:818.7px;width:25.5px;height:25.5px;background:#000000;border-radius:3px;"></div>
<div style="position:absolute;left:165.3px;top:854.6px;width:50.099999999999994px;height:25.3px;background:#ffffff;box-sizing:border-box;border:1px solid #d2d2d2;"></div>
<div style="position:absolute;left:235.6px;top:854.6px;width:24.400000000000006px;height:25.3px;background:#ffffff;box-sizing:border-box;border:1px solid #d2d2d2;"></div>
<div style="position:absolute;left:273.3px;top:854.6px;width:25.399999999999977px;height:25.3px;background:#ffffff;box-sizing:border-box;border:1px solid #d2d2d2;"></div>
<div style="position:absolute;left:312px;top:854.6px;width:24.399999999999977px;height:25.3px;background:#ffffff;box-sizing:border-box;border:1px solid #d2d2d2;"></div>
<div style="position:absolute;left:350px;top:854.6px;width:25.100000000000023px;height:25.3px;background:#ffffff;box-sizing:border-box;border:1px solid #d2d2d2;"></div>
<span id="t44" style="position:absolute;left:172.00px;top:861.59px;font-size:12.65px;line-height:12.65px;font-family:'Liberation Sans', sans-serif;font-weight:400;color:#222;white-space:pre;transform:scaleX(1.0439);transform-origin:0 0;">00000</span>
<span id="t45" style="position:absolute;left:238.60px;top:861.59px;font-size:12.65px;line-height:12.65px;font-family:'Liberation Sans', sans-serif;font-weight:400;color:#222;white-space:pre;transform:scaleX(0.9671);transform-origin:0 0;">0</span>
<span id="t46" style="position:absolute;left:277.30px;top:861.59px;font-size:12.65px;line-height:12.65px;font-family:'Liberation Sans', sans-serif;font-weight:400;color:#222;white-space:pre;transform:scaleX(0.9529);transform-origin:0 0;">0</span>
<span id="t47" style="position:absolute;left:315.40px;top:861.59px;font-size:12.65px;line-height:12.65px;font-family:'Liberation Sans', sans-serif;font-weight:400;color:#222;white-space:pre;transform:scaleX(0.9387);transform-origin:0 0;">0</span>
<span id="t48" style="position:absolute;left:353.10px;top:861.59px;font-size:12.65px;line-height:12.65px;font-family:'Liberation Sans', sans-serif;font-weight:400;color:#222;white-space:pre;transform:scaleX(0.8486);transform-origin:0 0;">100</span>
<span id="t49" style="position:absolute;left:186.70px;top:886.80px;font-size:11.34px;line-height:11.34px;font-family:'Liberation Sans', sans-serif;font-weight:400;color:#444;white-space:pre;transform:scaleX(1.0567);transform-origin:0 0;">Hex</span>
<span id="t50" style="position:absolute;left:247.40px;top:886.80px;font-size:11.34px;line-height:11.34px;font-family:'Liberation Sans', sans-serif;font-weight:400;color:#444;white-space:pre;transform:scaleX(0.8427);transform-origin:0 0;">R</span>
<span id="t51" style="position:absolute;left:284.90px;top:886.80px;font-size:11.34px;line-height:11.34px;font-family:'Liberation Sans', sans-serif;font-weight:400;color:#444;white-space:pre;transform:scaleX(1.0667);transform-origin:0 0;">G</span>
<span id="t52" style="position:absolute;left:324.20px;top:886.80px;font-size:11.34px;line-height:11.34px;font-family:'Liberation Sans', sans-serif;font-weight:400;color:#444;white-space:pre;transform:scaleX(0.8992);transform-origin:0 0;">B</span>
<span id="t53" style="position:absolute;left:361.90px;top:886.80px;font-size:11.34px;line-height:11.34px;font-family:'Liberation Sans', sans-serif;font-weight:400;color:#444;white-space:pre;transform:scaleX(0.9917);transform-origin:0 0;">A</span>
<div style="position:absolute;left:154.6px;top:905.5px;width:237.4px;height:1px;background:#eeeeee;"></div>
<div style="position:absolute;left:165.3px;top:917.2px;width:17.3px;height:17px;background:#D0021B;border-radius:3px;box-shadow:inset 0 0 0 1px rgba(0,0,0,.15);"></div>
<div style="position:absolute;left:193.8px;top:917.2px;width:17.3px;height:17px;background:#F5A623;border-radius:3px;box-shadow:inset 0 0 0 1px rgba(0,0,0,.15);"></div>
<div style="position:absolute;left:221.3px;top:917.2px;width:17.3px;height:17px;background:#F8E71C;border-radius:3px;box-shadow:inset 0 0 0 1px rgba(0,0,0,.15);"></div>
<div style="position:absolute;left:249.4px;top:917.2px;width:17.3px;height:17px;background:#8B572A;border-radius:3px;box-shadow:inset 0 0 0 1px rgba(0,0,0,.15);"></div>
<div style="position:absolute;left:277.7px;top:917.2px;width:17.3px;height:17px;background:#7ED321;border-radius:3px;box-shadow:inset 0 0 0 1px rgba(0,0,0,.15);"></div>
<div style="position:absolute;left:305.9px;top:917.2px;width:17.3px;height:17px;background:#417505;border-radius:3px;box-shadow:inset 0 0 0 1px rgba(0,0,0,.15);"></div>
<div style="position:absolute;left:333.8px;top:917.2px;width:17.3px;height:17px;background:#BD10E0;border-radius:3px;box-shadow:inset 0 0 0 1px rgba(0,0,0,.15);"></div>
<div style="position:absolute;left:361.9px;top:917.2px;width:17.3px;height:17px;background:#9013FE;border-radius:3px;box-shadow:inset 0 0 0 1px rgba(0,0,0,.15);"></div>
<div style="position:absolute;left:165.3px;top:945.2px;width:17.3px;height:17px;background:#4A90E2;border-radius:3px;box-shadow:inset 0 0 0 1px rgba(0,0,0,.15);"></div>
<div style="position:absolute;left:193.8px;top:945.2px;width:17.3px;height:17px;background:#50E3C2;border-radius:3px;box-shadow:inset 0 0 0 1px rgba(0,0,0,.15);"></div>
<div style="position:absolute;left:221.3px;top:945.2px;width:17.3px;height:17px;background:#B8E986;border-radius:3px;box-shadow:inset 0 0 0 1px rgba(0,0,0,.15);"></div>
<div style="position:absolute;left:249.4px;top:945.2px;width:17.3px;height:17px;background:#000000;border-radius:3px;box-shadow:inset 0 0 0 1px rgba(0,0,0,.15);"></div>
<div style="position:absolute;left:277.7px;top:945.2px;width:17.3px;height:17px;background:#4A4A4A;border-radius:3px;box-shadow:inset 0 0 0 1px rgba(0,0,0,.15);"></div>
<div style="position:absolute;left:305.9px;top:945.2px;width:17.3px;height:17px;background:#9B9B9B;border-radius:3px;box-shadow:inset 0 0 0 1px rgba(0,0,0,.15);"></div>
<div style="position:absolute;left:333.8px;top:945.2px;width:17.3px;height:17px;background:#FFFFFF;border-radius:3px;box-shadow:inset 0 0 0 1px rgba(0,0,0,.15);"></div>
<div style="position:absolute;left:154.5px;top:973.8px;width:75px;height:38.1px;background:#2e2467;border-radius:4px;box-shadow:0 2px 4px rgba(0,0,0,.25);"></div>
<span id="t54" style="position:absolute;left:172.40px;top:984.83px;font-size:15.55px;line-height:15.55px;font-family:'Liberation Sans', sans-serif;font-weight:700;color:#ffffff;white-space:pre;transform:scaleX(0.9100);transform-origin:0 0;">Apply</span>
<svg style="position:absolute;left:842px;top:237px;" width="28" height="24" viewBox="0 0 28 24"><path d="M9 3 L3 9 L9 15 M3.5 9 H18.6 A5.4 5.4 0 0 1 18.6 19.8 H15.5" fill="none" stroke="#f2f2f2" stroke-width="2.3" stroke-linecap="round" stroke-linejoin="round"/></svg>
<svg style="position:absolute;left:896px;top:237px;" width="28" height="24" viewBox="0 0 28 24"><path d="M17.8 3 L23.8 9 L17.8 15 M23.3 9 H8.9 A5.4 5.4 0 0 0 8.9 19.8 H12" fill="none" stroke="#a9a9a9" stroke-width="2.3" stroke-linecap="round" stroke-linejoin="round"/></svg>
<div style="position:absolute;left:810px;top:278.6px;width:304px;height:540px;background:radial-gradient(ellipse 198px 18px at 50% 3.0%,rgba(160,226,212,.42),rgba(165,228,214,0)),radial-gradient(ellipse 154px 13px at 30% 8.0%,rgba(40,168,130,.42),rgba(40,168,130,0)),radial-gradient(ellipse 165px 15px at 85% 10.0%,rgba(160,226,212,.42),rgba(165,228,214,0)),radial-gradient(ellipse 176px 26px at 75% 13.0%,rgba(160,226,212,.42),rgba(165,228,214,0)),radial-gradient(ellipse 187px 22px at 60% 16.5%,rgba(160,226,212,.42),rgba(165,228,214,0)),radial-gradient(ellipse 132px 11px at 20% 14.0%,rgba(160,226,212,.42),rgba(165,228,214,0)),radial-gradient(ellipse 176px 13px at 70% 16.0%,rgba(40,168,130,.42),rgba(40,168,130,0)),radial-gradient(ellipse 209px 20px at 55% 20.0%,rgba(160,226,212,.42),rgba(165,228,214,0)),radial-gradient(ellipse 132px 13px at 15% 23.0%,rgba(40,168,130,.42),rgba(40,168,130,0)),radial-gradient(ellipse 187px 18px at 80% 25.0%,rgba(160,226,212,.42),rgba(165,228,214,0)),radial-gradient(ellipse 165px 13px at 40% 28.0%,rgba(160,226,212,.42),rgba(165,228,214,0)),radial-gradient(ellipse 132px 11px at 90% 31.0%,rgba(40,168,130,.42),rgba(40,168,130,0)),radial-gradient(ellipse 220px 18px at 35% 34.5%,rgba(160,226,212,.42),rgba(165,228,214,0)),radial-gradient(ellipse 187px 15px at 75% 37.5%,rgba(40,168,130,.42),rgba(40,168,130,0)),radial-gradient(ellipse 165px 15px at 20% 40.0%,rgba(160,226,212,.42),rgba(165,228,214,0)),radial-gradient(ellipse 198px 13px at 60% 42.5%,rgba(160,226,212,.42),rgba(165,228,214,0)),radial-gradient(ellipse 132px 13px at 10% 45.0%,rgba(40,168,130,.42),rgba(40,168,130,0)),radial-gradient(ellipse 165px 15px at 50% 47.0%,rgba(160,226,212,.42),rgba(165,228,214,0)),radial-gradient(ellipse 154px 13px at 85% 50.0%,rgba(40,168,130,.42),rgba(40,168,130,0)),radial-gradient(ellipse 220px 18px at 30% 53.0%,rgba(160,226,212,.42),rgba(165,228,214,0)),radial-gradient(ellipse 176px 13px at 70% 55.5%,rgba(160,226,212,.42),rgba(165,228,214,0)),radial-gradient(ellipse 110px 18px at 5% 58.0%,rgba(40,168,130,.42),rgba(40,168,130,0)),radial-gradient(ellipse 176px 13px at 45% 61.0%,rgba(160,226,212,.42),rgba(165,228,214,0)),radial-gradient(ellipse 132px 13px at 90% 64.0%,rgba(40,168,130,.42),rgba(40,168,130,0)),radial-gradient(ellipse 198px 18px at 30% 67.0%,rgba(160,226,212,.42),rgba(165,228,214,0)),radial-gradient(ellipse 187px 13px at 65% 69.5%,rgba(160,226,212,.42),rgba(165,228,214,0)),radial-gradient(ellipse 99px 22px at 5% 72.0%,rgba(40,168,130,.42),rgba(40,168,130,0)),radial-gradient(ellipse 209px 18px at 50% 75.0%,rgba(160,226,212,.42),rgba(165,228,214,0)),radial-gradient(ellipse 154px 13px at 15% 77.5%,rgba(160,226,212,.42),rgba(165,228,214,0)),radial-gradient(ellipse 176px 15px at 80% 80.0%,rgba(40,168,130,.42),rgba(40,168,130,0)),radial-gradient(ellipse 220px 20px at 40% 83.0%,rgba(160,226,212,.42),rgba(165,228,214,0)),radial-gradient(ellipse 143px 15px at 90% 86.0%,rgba(40,168,130,.42),rgba(40,168,130,0)),radial-gradient(ellipse 187px 15px at 25% 88.5%,rgba(160,226,212,.42),rgba(165,228,214,0)),radial-gradient(ellipse 198px 18px at 60% 91.0%,rgba(160,226,212,.42),rgba(165,228,214,0)),radial-gradient(ellipse 132px 13px at 10% 93.5%,rgba(40,168,130,.42),rgba(40,168,130,0)),radial-gradient(ellipse 220px 18px at 55% 96.0%,rgba(160,226,212,.42),rgba(165,228,214,0)),radial-gradient(ellipse 165px 13px at 85% 98.5%,rgba(40,168,130,.42),rgba(40,168,130,0)),linear-gradient(to bottom,#5ec4a8 0%,#55bfa0 10%,#6ac9af 15%,#84d3bf 17%,#6acaaf 22%,#58c0a2 35%,#72cdb5 42%,#5cc2a5 50%,#7ad0b9 55%,#56bfa0 60%,#6ecbb2 68%,#5ac1a3 74%,#74cdb4 80%,#55bea0 86%,#80d2bd 93%,#5cc2a5 100%);overflow:hidden;"></div>
<div style="position:absolute;left:810px;top:278.6px;width:304px;height:540px;background:linear-gradient(to right,rgba(30,140,110,.25),rgba(30,140,110,0) 15%,rgba(30,140,110,0) 85%,rgba(30,140,110,.2));"></div>
<div style="position:absolute;left:823.3px;top:372px;width:290.7px;height:85px;background:linear-gradient(to right,#687a6d 0%,#7b917f 20%,#9cb59c 50%,#b6d4b2 75%,#c7e9c3 100%);border-radius:7px 0 0 7px;"></div>
<div style="position:absolute;left:850.8px;top:525.8px;width:255.20000000000005px;height:41.700000000000045px;background:linear-gradient(to right,#687a6d 0%,#7b917f 20%,#9cb59c 50%,#b6d4b2 75%,#c7e9c3 100%);border-radius:4px;box-shadow:1px 4px 5px rgba(0,40,30,.45);"></div>
<div style="position:absolute;left:849.5px;top:604.5px;width:258.0px;height:41.5px;background:linear-gradient(to right,#687a6d 0%,#7b917f 20%,#9cb59c 50%,#b6d4b2 75%,#c7e9c3 100%);border-radius:4px;box-shadow:1px 4px 5px rgba(0,40,30,.45);"></div>
<div style="position:absolute;left:845px;top:684px;width:267.4000000000001px;height:43.299999999999955px;background:linear-gradient(to right,#687a6d 0%,#7b917f 20%,#9cb59c 50%,#b6d4b2 75%,#c7e9c3 100%);border-radius:4px;box-shadow:1px 4px 5px rgba(0,40,30,.45);"></div>
<span id="t55" style="position:absolute;left:880.00px;top:532.97px;font-size:18.46px;line-height:18.46px;font-family:'Liberation Sans', sans-serif;font-weight:700;color:#141414;white-space:pre;transform:scaleX(0.9912);transform-origin:0 0;">Keyboard</span>
<span id="t56" style="position:absolute;left:880.30px;top:609.40px;font-size:18.90px;line-height:18.90px;font-family:'Liberation Sans', sans-serif;font-weight:700;color:#141414;white-space:pre;transform:scaleX(0.9531);transform-origin:0 0;">Monitor</span>
<span id="t57" style="position:absolute;left:881.50px;top:693.50px;font-size:18.90px;line-height:18.90px;font-family:'Liberation Sans', sans-serif;font-weight:700;color:#141414;white-space:pre;transform:scaleX(0.9496);transform-origin:0 0;">Speakers</span>
<span id="t58" style="position:absolute;left:835.90px;top:393.39px;font-size:18.31px;line-height:18.31px;font-family:'Liberation Sans', sans-serif;font-weight:700;color:#141414;white-space:pre;transform:scaleX(0.9872);transform-origin:0 0;">Which device is used to input</span>
<span id="t59" style="position:absolute;left:836.00px;top:416.29px;font-size:18.31px;line-height:18.31px;font-family:'Liberation Sans', sans-serif;font-weight:700;color:#141414;white-space:pre;transform:scaleX(0.9944);transform-origin:0 0;">text into a computer?</span>
<div style="position:absolute;left:835px;top:392px;width:268px;height:44px;box-sizing:border-box;border:1px solid rgba(140,185,225,.9);"></div>
<div style="position:absolute;left:968.5px;top:349px;width:1px;height:43px;background:rgba(150,190,225,.9);"></div>
<div style="position:absolute;left:865px;top:370px;width:86px;height:86px;border-radius:50%;background:rgba(212,198,92,.9);"></div>
<div style="position:absolute;left:0;top:0;width:1728px;height:1080px;clip-path:circle(43px at 908px 413px);">
<span id="t60" style="position:absolute;left:835.90px;top:393.39px;font-size:18.31px;line-height:18.31px;font-family:'Liberation Sans', sans-serif;font-weight:700;color:#6e6414;white-space:pre;transform:scaleX(0.9872);transform-origin:0 0;">Which device is used to input</span>
<span id="t61" style="position:absolute;left:836.00px;top:416.29px;font-size:18.31px;line-height:18.31px;font-family:'Liberation Sans', sans-serif;font-weight:700;color:#6e6414;white-space:pre;transform:scaleX(0.9944);transform-origin:0 0;">text into a computer?</span>
</div>
<div style="position:absolute;left:963px;top:343px;width:12px;height:12px;border-radius:50%;background:#1a8cf2;box-shadow:0 0 0 .5px #0b6ad0;"></div>
<div style="position:absolute;left:829px;top:386px;width:12px;height:12px;border-radius:50%;background:#1a8cf2;box-shadow:0 0 0 .5px #0b6ad0;"></div>
<div style="position:absolute;left:963px;top:386px;width:12px;height:12px;border-radius:50%;background:#1a8cf2;box-shadow:0 0 0 .5px #0b6ad0;"></div>
<div style="position:absolute;left:1097px;top:386px;width:12px;height:12px;border-radius:50%;background:#1a8cf2;box-shadow:0 0 0 .5px #0b6ad0;"></div>
<div style="position:absolute;left:829px;top:408px;width:12px;height:12px;border-radius:50%;background:#1a8cf2;box-shadow:0 0 0 .5px #0b6ad0;"></div>
<div style="position:absolute;left:1097px;top:408px;width:12px;height:12px;border-radius:50%;background:#1a8cf2;box-shadow:0 0 0 .5px #0b6ad0;"></div>
<div style="position:absolute;left:829px;top:430px;width:12px;height:12px;border-radius:50%;background:#1a8cf2;box-shadow:0 0 0 .5px #0b6ad0;"></div>
<div style="position:absolute;left:963px;top:430px;width:12px;height:12px;border-radius:50%;background:#1a8cf2;box-shadow:0 0 0 .5px #0b6ad0;"></div>
<div style="position:absolute;left:1097px;top:430px;width:12px;height:12px;border-radius:50%;background:#1a8cf2;box-shadow:0 0 0 .5px #0b6ad0;"></div>
<svg style="position:absolute;left:897px;top:402px;" width="22" height="22" viewBox="0 0 22 22"><path d="M11 1 L21 11 L11 21 L1 11z" fill="#fff" stroke="#ccc" stroke-width=".6"/><path d="M11 3.2 L14 6.5 H12.2 V9.8 H15.5 V8 L18.8 11 L15.5 14 V12.2 H12.2 V15.5 H14 L11 18.8 L8 15.5 H9.8 V12.2 H6.5 V14 L3.2 11 L6.5 8 V9.8 H9.8 V6.5 H8z" fill="#0a0a0a"/></svg>
<div style="position:absolute;left:1279.9px;top:231.5px;width:149.5px;height:42.5px;background:#1c5ce8;border-radius:7px;"></div>
<span id="t62" style="position:absolute;left:1301.80px;top:243.90px;font-size:17.01px;line-height:17.01px;font-family:'Liberation Sans', sans-serif;font-weight:400;color:#ffffff;white-space:pre;transform:scaleX(0.9480);transform-origin:0 0;-webkit-text-stroke:0.3px #ffffff;">Save Progress</span>
<span id="t63" style="position:absolute;left:1472.60px;top:238.59px;font-size:20.86px;line-height:20.86px;font-family:'Liberation Sans', sans-serif;font-weight:700;color:#dedede;white-space:pre;transform:scaleX(0.9747);transform-origin:0 0;">Elements</span>
<svg style="position:absolute;left:1679px;top:249px;" width="24" height="24" viewBox="0 0 24 24"><path d="M2.5 8 V2.5 H8 M16 2.5 H21.5 V8 M21.5 16 V21.5 H16 M8 21.5 H2.5 V16" fill="none" stroke="#8a8a8a" stroke-width="2"/></svg>
<div style="position:absolute;left:1463.6px;top:419px;width:252.4px;height:37.7px;background:#253440;"></div>
<svg style="position:absolute;left:1469px;top:286.7px;" width="21" height="18" viewBox="0 0 21 18"><path d="M1.5 2 H7 L9 4.5 H19 V16.5 H1.5z" fill="none" stroke="#8c8c8c" stroke-width="1.5"/><path d="M8 7.5 L13 10.5 L8 13.5z" fill="#8c8c8c"/></svg>
<span id="t64" style="position:absolute;left:1498.60px;top:286.70px;font-size:15.12px;line-height:15.12px;font-family:'Liberation Sans', sans-serif;font-weight:400;color:#dcdcdc;white-space:pre;transform:scaleX(0.9896);transform-origin:0 0;-webkit-text-stroke:0.25px #dcdcdc;">Media(video) 0bo9eym</span>
<div style="position:absolute;left:1673.6px;top:284.9px;width:30px;height:21.6px;background:#e8333a;border-radius:4px;"></div>
<svg style="position:absolute;left:1680px;top:287.2px;" width="17" height="17" viewBox="0 0 17 17"><path d="M3 4 H14 M6.5 4 V2.5 H10.5 V4 M4.5 4 L5.3 15 H11.7 L12.5 4 M7.2 6.5 V13 M9.8 6.5 V13" fill="none" stroke="#fbe6e6" stroke-width="1.2"/></svg>
<svg style="position:absolute;left:1469px;top:334.2px;" width="21" height="18" viewBox="0 0 21 18"><path d="M1.5 2 H7 L9 4.5 H19 V16.5 H1.5z" fill="none" stroke="#8c8c8c" stroke-width="1.5"/><path d="M8 7.5 L13 10.5 L8 13.5z" fill="#8c8c8c"/></svg>
<span id="t65" style="position:absolute;left:1498.60px;top:335.20px;font-size:15.12px;line-height:15.12px;font-family:'Liberation Sans', sans-serif;font-weight:400;color:#dcdcdc;white-space:pre;transform:scaleX(0.9845);transform-origin:0 0;-webkit-text-stroke:0.25px #dcdcdc;">Media(video) 0rz9vml</span>
<div style="position:absolute;left:1673.6px;top:332.4px;width:30px;height:21.6px;background:#e8333a;border-radius:4px;"></div>
<svg style="position:absolute;left:1680px;top:334.7px;" width="17" height="17" viewBox="0 0 17 17"><path d="M3 4 H14 M6.5 4 V2.5 H10.5 V4 M4.5 4 L5.3 15 H11.7 L12.5 4 M7.2 6.5 V13 M9.8 6.5 V13" fill="none" stroke="#fbe6e6" stroke-width="1.2"/></svg>
<svg style="position:absolute;left:1469px;top:381.7px;" width="21" height="18" viewBox="0 0 21 18"><path d="M1.5 2 H7 L9 4.5 H19 V16.5 H1.5z" fill="none" stroke="#8c8c8c" stroke-width="1.5"/><path d="M8 7.5 L13 10.5 L8 13.5z" fill="#8c8c8c"/></svg>
<span id="t66" style="position:absolute;left:1498.60px;top:381.70px;font-size:15.12px;line-height:15.12px;font-family:'Liberation Sans', sans-serif;font-weight:400;color:#dcdcdc;white-space:pre;transform:scaleX(0.9801);transform-origin:0 0;-webkit-text-stroke:0.25px #dcdcdc;">Media(video) lpb26k0</span>
<div style="position:absolute;left:1673.6px;top:379.9px;width:30px;height:21.6px;background:#e8333a;border-radius:4px;"></div>
<svg style="position:absolute;left:1680px;top:382.2px;" width="17" height="17" viewBox="0 0 17 17"><path d="M3 4 H14 M6.5 4 V2.5 H10.5 V4 M4.5 4 L5.3 15 H11.7 L12.5 4 M7.2 6.5 V13 M9.8 6.5 V13" fill="none" stroke="#fbe6e6" stroke-width="1.2"/></svg>
<svg style="position:absolute;left:1469px;top:428.2px;" width="20" height="21" viewBox="0 0 20 21"><path d="M3.5 14.5 L10 1.5 L16.5 14.5 M5.5 10.5 H14.5" fill="none" stroke="#8c8c8c" stroke-width="1.4"/><path d="M1.5 19 H18.5" stroke="#8c8c8c" stroke-width="1.4"/></svg>
<span id="t67" style="position:absolute;left:1498.60px;top:430.20px;font-size:15.12px;line-height:15.12px;font-family:'Liberation Sans', sans-serif;font-weight:400;color:#dcdcdc;white-space:pre;transform:scaleX(0.8990);transform-origin:0 0;-webkit-text-stroke:0.25px #dcdcdc;">Question 1</span>
<div style="position:absolute;left:1673.6px;top:427.4px;width:30px;height:21.6px;background:#e8333a;border-radius:4px;"></div>
<svg style="position:absolute;left:1680px;top:429.7px;" width="17" height="17" viewBox="0 0 17 17"><path d="M3 4 H14 M6.5 4 V2.5 H10.5 V4 M4.5 4 L5.3 15 H11.7 L12.5 4 M7.2 6.5 V13 M9.8 6.5 V13" fill="none" stroke="#fbe6e6" stroke-width="1.2"/></svg>
<svg style="position:absolute;left:1469px;top:475.7px;" width="20" height="21" viewBox="0 0 20 21"><path d="M3.5 14.5 L10 1.5 L16.5 14.5 M5.5 10.5 H14.5" fill="none" stroke="#8c8c8c" stroke-width="1.4"/><path d="M1.5 19 H18.5" stroke="#8c8c8c" stroke-width="1.4"/></svg>
<span id="t68" style="position:absolute;left:1498.60px;top:476.70px;font-size:15.12px;line-height:15.12px;font-family:'Liberation Sans', sans-serif;font-weight:400;color:#dcdcdc;white-space:pre;transform:scaleX(0.8921);transform-origin:0 0;-webkit-text-stroke:0.25px #dcdcdc;">Question 1 Option 1</span>
<div style="position:absolute;left:1673.6px;top:474.9px;width:30px;height:21.6px;background:#e8333a;border-radius:4px;"></div>
<svg style="position:absolute;left:1680px;top:477.2px;" width="17" height="17" viewBox="0 0 17 17"><path d="M3 4 H14 M6.5 4 V2.5 H10.5 V4 M4.5 4 L5.3 15 H11.7 L12.5 4 M7.2 6.5 V13 M9.8 6.5 V13" fill="none" stroke="#fbe6e6" stroke-width="1.2"/></svg>
<svg style="position:absolute;left:1469px;top:523.2px;" width="20" height="21" viewBox="0 0 20 21"><path d="M3.5 14.5 L10 1.5 L16.5 14.5 M5.5 10.5 H14.5" fill="none" stroke="#8c8c8c" stroke-width="1.4"/><path d="M1.5 19 H18.5" stroke="#8c8c8c" stroke-width="1.4"/></svg>
<span id="t69" style="position:absolute;left:1498.60px;top:525.20px;font-size:15.12px;line-height:15.12px;font-family:'Liberation Sans', sans-serif;font-weight:400;color:#dcdcdc;white-space:pre;transform:scaleX(0.9151);transform-origin:0 0;-webkit-text-stroke:0.25px #dcdcdc;">Question 1 Option 2</span>
<div style="position:absolute;left:1673.6px;top:522.4000000000001px;width:30px;height:21.6px;background:#e8333a;border-radius:4px;"></div>
<svg style="position:absolute;left:1680px;top:524.7px;" width="17" height="17" viewBox="0 0 17 17"><path d="M3 4 H14 M6.5 4 V2.5 H10.5 V4 M4.5 4 L5.3 15 H11.7 L12.5 4 M7.2 6.5 V13 M9.8 6.5 V13" fill="none" stroke="#fbe6e6" stroke-width="1.2"/></svg>
<svg style="position:absolute;left:1469px;top:570.7px;" width="20" height="21" viewBox="0 0 20 21"><path d="M3.5 14.5 L10 1.5 L16.5 14.5 M5.5 10.5 H14.5" fill="none" stroke="#8c8c8c" stroke-width="1.4"/><path d="M1.5 19 H18.5" stroke="#8c8c8c" stroke-width="1.4"/></svg>
<span id="t70" style="position:absolute;left:1498.60px;top:571.70px;font-size:15.12px;line-height:15.12px;font-family:'Liberation Sans', sans-serif;font-weight:400;color:#dcdcdc;white-space:pre;transform:scaleX(0.9159);transform-origin:0 0;-webkit-text-stroke:0.25px #dcdcdc;">Question 1 Option 3</span>
<div style="position:absolute;left:1673.6px;top:569.9000000000001px;width:30px;height:21.6px;background:#e8333a;border-radius:4px;"></div>
<svg style="position:absolute;left:1680px;top:572.2px;" width="17" height="17" viewBox="0 0 17 17"><path d="M3 4 H14 M6.5 4 V2.5 H10.5 V4 M4.5 4 L5.3 15 H11.7 L12.5 4 M7.2 6.5 V13 M9.8 6.5 V13" fill="none" stroke="#fbe6e6" stroke-width="1.2"/></svg>
<svg style="position:absolute;left:1469px;top:618.2px;" width="20" height="21" viewBox="0 0 20 21"><path d="M3.5 14.5 L10 1.5 L16.5 14.5 M5.5 10.5 H14.5" fill="none" stroke="#8c8c8c" stroke-width="1.4"/><path d="M1.5 19 H18.5" stroke="#8c8c8c" stroke-width="1.4"/></svg>
<span id="t71" style="position:absolute;left:1498.60px;top:620.20px;font-size:15.12px;line-height:15.12px;font-family:'Liberation Sans', sans-serif;font-weight:400;color:#dcdcdc;white-space:pre;transform:scaleX(0.9123);transform-origin:0 0;-webkit-text-stroke:0.25px #dcdcdc;">Question 1 Answer</span>
<div style="position:absolute;left:1673.6px;top:617.4000000000001px;width:30px;height:21.6px;background:#e8333a;border-radius:4px;"></div>
<svg style="position:absolute;left:1680px;top:619.7px;" width="17" height="17" viewBox="0 0 17 17"><path d="M3 4 H14 M6.5 4 V2.5 H10.5 V4 M4.5 4 L5.3 15 H11.7 L12.5 4 M7.2 6.5 V13 M9.8 6.5 V13" fill="none" stroke="#fbe6e6" stroke-width="1.2"/></svg>
<svg style="position:absolute;left:1469px;top:665.7px;" width="20" height="21" viewBox="0 0 20 21"><path d="M3.5 14.5 L10 1.5 L16.5 14.5 M5.5 10.5 H14.5" fill="none" stroke="#8c8c8c" stroke-width="1.4"/><path d="M1.5 19 H18.5" stroke="#8c8c8c" stroke-width="1.4"/></svg>
<span id="t72" style="position:absolute;left:1498.60px;top:666.70px;font-size:15.12px;line-height:15.12px;font-family:'Liberation Sans', sans-serif;font-weight:400;color:#dcdcdc;white-space:pre;transform:scaleX(0.9360);transform-origin:0 0;-webkit-text-stroke:0.25px #dcdcdc;">Question 2</span>
<div style="position:absolute;left:1673.6px;top:664.9000000000001px;width:30px;height:21.6px;background:#e8333a;border-radius:4px;"></div>
<svg style="position:absolute;left:1680px;top:667.2px;" width="17" height="17" viewBox="0 0 17 17"><path d="M3 4 H14 M6.5 4 V2.5 H10.5 V4 M4.5 4 L5.3 15 H11.7 L12.5 4 M7.2 6.5 V13 M9.8 6.5 V13" fill="none" stroke="#fbe6e6" stroke-width="1.2"/></svg>
<svg style="position:absolute;left:1469px;top:713.2px;" width="20" height="21" viewBox="0 0 20 21"><path d="M3.5 14.5 L10 1.5 L16.5 14.5 M5.5 10.5 H14.5" fill="none" stroke="#8c8c8c" stroke-width="1.4"/><path d="M1.5 19 H18.5" stroke="#8c8c8c" stroke-width="1.4"/></svg>
<span id="t73" style="position:absolute;left:1498.60px;top:715.20px;font-size:15.12px;line-height:15.12px;font-family:'Liberation Sans', sans-serif;font-weight:400;color:#dcdcdc;white-space:pre;transform:scaleX(0.9181);transform-origin:0 0;-webkit-text-stroke:0.25px #dcdcdc;">Question 2 Option 1</span>
<div style="position:absolute;left:1673.6px;top:712.4000000000001px;width:30px;height:21.6px;background:#e8333a;border-radius:4px;"></div>
<svg style="position:absolute;left:1680px;top:714.7px;" width="17" height="17" viewBox="0 0 17 17"><path d="M3 4 H14 M6.5 4 V2.5 H10.5 V4 M4.5 4 L5.3 15 H11.7 L12.5 4 M7.2 6.5 V13 M9.8 6.5 V13" fill="none" stroke="#fbe6e6" stroke-width="1.2"/></svg>
<svg style="position:absolute;left:1469px;top:760.7px;" width="20" height="21" viewBox="0 0 20 21"><path d="M3.5 14.5 L10 1.5 L16.5 14.5 M5.5 10.5 H14.5" fill="none" stroke="#8c8c8c" stroke-width="1.4"/><path d="M1.5 19 H18.5" stroke="#8c8c8c" stroke-width="1.4"/></svg>
<span id="t74" style="position:absolute;left:1498.60px;top:761.70px;font-size:15.12px;line-height:15.12px;font-family:'Liberation Sans', sans-serif;font-weight:400;color:#dcdcdc;white-space:pre;transform:scaleX(0.9404);transform-origin:0 0;-webkit-text-stroke:0.25px #dcdcdc;">Question 2 Option 2</span>
<div style="position:absolute;left:1673.6px;top:759.9000000000001px;width:30px;height:21.6px;background:#e8333a;border-radius:4px;"></div>
<svg style="position:absolute;left:1680px;top:762.2px;" width="17" height="17" viewBox="0 0 17 17"><path d="M3 4 H14 M6.5 4 V2.5 H10.5 V4 M4.5 4 L5.3 15 H11.7 L12.5 4 M7.2 6.5 V13 M9.8 6.5 V13" fill="none" stroke="#fbe6e6" stroke-width="1.2"/></svg>
<svg style="position:absolute;left:1469px;top:808.2px;" width="20" height="21" viewBox="0 0 20 21"><path d="M3.5 14.5 L10 1.5 L16.5 14.5 M5.5 10.5 H14.5" fill="none" stroke="#8c8c8c" stroke-width="1.4"/><path d="M1.5 19 H18.5" stroke="#8c8c8c" stroke-width="1.4"/></svg>
<span id="t75" style="position:absolute;left:1498.60px;top:810.20px;font-size:15.12px;line-height:15.12px;font-family:'Liberation Sans', sans-serif;font-weight:400;color:#dcdcdc;white-space:pre;transform:scaleX(0.9404);transform-origin:0 0;-webkit-text-stroke:0.25px #dcdcdc;">Question 2 Option 3</span>
<div style="position:absolute;left:1673.6px;top:807.4000000000001px;width:30px;height:21.6px;background:#e8333a;border-radius:4px;"></div>
<svg style="position:absolute;left:1680px;top:809.7px;" width="17" height="17" viewBox="0 0 17 17"><path d="M3 4 H14 M6.5 4 V2.5 H10.5 V4 M4.5 4 L5.3 15 H11.7 L12.5 4 M7.2 6.5 V13 M9.8 6.5 V13" fill="none" stroke="#fbe6e6" stroke-width="1.2"/></svg>
<svg style="position:absolute;left:1469px;top:855.7px;" width="20" height="21" viewBox="0 0 20 21"><path d="M3.5 14.5 L10 1.5 L16.5 14.5 M5.5 10.5 H14.5" fill="none" stroke="#8c8c8c" stroke-width="1.4"/><path d="M1.5 19 H18.5" stroke="#8c8c8c" stroke-width="1.4"/></svg>
<span id="t76" style="position:absolute;left:1498.60px;top:856.70px;font-size:15.12px;line-height:15.12px;font-family:'Liberation Sans', sans-serif;font-weight:400;color:#dcdcdc;white-space:pre;transform:scaleX(0.9391);transform-origin:0 0;-webkit-text-stroke:0.25px #dcdcdc;">Question 2 Answer</span>
<div style="position:absolute;left:1673.6px;top:854.9000000000001px;width:30px;height:21.6px;background:#e8333a;border-radius:4px;"></div>
<svg style="position:absolute;left:1680px;top:857.2px;" width="17" height="17" viewBox="0 0 17 17"><path d="M3 4 H14 M6.5 4 V2.5 H10.5 V4 M4.5 4 L5.3 15 H11.7 L12.5 4 M7.2 6.5 V13 M9.8 6.5 V13" fill="none" stroke="#fbe6e6" stroke-width="1.2"/></svg>
<svg style="position:absolute;left:508px;top:894px;" width="26" height="30" viewBox="0 0 26 30"><path d="M2 2.3 L22.4 14.6 L2 27z" fill="#e8e8e8"/></svg>
<span id="t77" style="position:absolute;left:573.70px;top:899.67px;font-size:20.80px;line-height:20.80px;font-family:'Liberation Mono', monospace;font-weight:400;color:#e2e2e2;white-space:pre;transform:scaleX(0.8275);transform-origin:0 0;">0:01.75</span>
<span id="t78" style="position:absolute;left:669.00px;top:899.67px;font-size:20.80px;line-height:20.80px;font-family:'Liberation Mono', monospace;font-weight:400;color:#e2e2e2;white-space:pre;transform:scaleX(0.8298);transform-origin:0 0;">0:39.00</span>
<div style="position:absolute;left:478.5px;top:939px;width:1236.3px;height:32.9px;background:#c9d5e1;"></div>
<svg style="position:absolute;left:478.5px;top:939px;" width="1237" height="33" viewBox="0 0 1237 33"><rect x="30.6" y="0" width="1.6" height="8" fill="#4f5358"/><rect x="62.3" y="0" width="1.6" height="8" fill="#4f5358"/><rect x="94.0" y="0" width="1.6" height="8" fill="#4f5358"/><rect x="125.7" y="0" width="1.6" height="8" fill="#4f5358"/><rect x="157.4" y="0" width="1.6" height="17" fill="#4f5358"/><rect x="189.1" y="0" width="1.6" height="8" fill="#4f5358"/><rect x="220.7" y="0" width="1.6" height="8" fill="#4f5358"/><rect x="252.4" y="0" width="1.6" height="8" fill="#4f5358"/><rect x="284.1" y="0" width="1.6" height="8" fill="#4f5358"/><rect x="315.8" y="0" width="1.6" height="17" fill="#4f5358"/><rect x="347.5" y="0" width="1.6" height="8" fill="#4f5358"/><rect x="379.2" y="0" width="1.6" height="8" fill="#4f5358"/><rect x="410.9" y="0" width="1.6" height="8" fill="#4f5358"/><rect x="442.6" y="0" width="1.6" height="8" fill="#4f5358"/><rect x="474.3" y="0" width="1.6" height="17" fill="#4f5358"/><rect x="505.9" y="0" width="1.6" height="8" fill="#4f5358"/><rect x="537.6" y="0" width="1.6" height="8" fill="#4f5358"/><rect x="569.3" y="0" width="1.6" height="8" fill="#4f5358"/><rect x="601.0" y="0" width="1.6" height="8" fill="#4f5358"/><rect x="632.7" y="0" width="1.6" height="17" fill="#4f5358"/><rect x="664.4" y="0" width="1.6" height="8" fill="#4f5358"/><rect x="696.1" y="0" width="1.6" height="8" fill="#4f5358"/><rect x="727.8" y="0" width="1.6" height="8" fill="#4f5358"/><rect x="759.5" y="0" width="1.6" height="8" fill="#4f5358"/><rect x="791.2" y="0" width="1.6" height="17" fill="#4f5358"/><rect x="822.9" y="0" width="1.6" height="8" fill="#4f5358"/><rect x="854.5" y="0" width="1.6" height="8" fill="#4f5358"/><rect x="886.2" y="0" width="1.6" height="8" fill="#4f5358"/><rect x="917.9" y="0" width="1.6" height="8" fill="#4f5358"/><rect x="949.6" y="0" width="1.6" height="17" fill="#4f5358"/><rect x="981.3" y="0" width="1.6" height="8" fill="#4f5358"/><rect x="1013.0" y="0" width="1.6" height="8" fill="#4f5358"/><rect x="1044.7" y="0" width="1.6" height="8" fill="#4f5358"/><rect x="1076.4" y="0" width="1.6" height="8" fill="#4f5358"/><rect x="1108.1" y="0" width="1.6" height="17" fill="#4f5358"/><rect x="1139.8" y="0" width="1.6" height="8" fill="#4f5358"/><rect x="1171.4" y="0" width="1.6" height="8" fill="#4f5358"/><rect x="1203.1" y="0" width="1.6" height="8" fill="#4f5358"/></svg>
<div style="position:absolute;left:532px;top:939px;width:4.5px;height:33px;background:#050505;border-radius:2px;"></div>
<div style="position:absolute;left:480px;top:980.4px;width:409.6px;height:27.6px;background:#3a2bcc;border-radius:14px;"></div>
<div style="position:absolute;left:891.5px;top:1016.3px;width:409px;height:27.7px;background:#3a2bcc;border-radius:14px;"></div>
<div style="position:absolute;left:1305px;top:1052px;width:409px;height:6px;background:#3a2bcc;border-radius:14px 14px 0 0/6px 6px 0 0;"></div>
<div style="position:absolute;left:473.0px;top:988.5px;width:11px;height:11px;background:#080808;box-sizing:border-box;border:1.6px solid #62a6ee;"></div>
<div style="position:absolute;left:884.1px;top:988.5px;width:11px;height:11px;background:#080808;box-sizing:border-box;border:1.6px solid #62a6ee;"></div>
<div style="position:absolute;left:884.5px;top:1024.7px;width:11px;height:11px;background:#080808;box-sizing:border-box;border:1.6px solid #62a6ee;"></div>
<div style="position:absolute;left:1296.5px;top:1024.7px;width:11px;height:11px;background:#080808;box-sizing:border-box;border:1.6px solid #62a6ee;"></div>
<svg style="position:absolute;left:487px;top:984px;" width="22" height="20" viewBox="0 0 22 20"><g fill="none" stroke="#f0f0f0" stroke-width="1.4"><rect x="1.5" y="7" width="19" height="11"/><rect x="1.5" y="2" width="19" height="5"/><path d="M5 2 L7.5 7 M9.5 2 L12 7 M14 2 L16.5 7 M18.5 2 L20.5 6"/></g></svg>
<span id="t79" style="position:absolute;left:517.40px;top:986.05px;font-size:14.83px;line-height:14.83px;font-family:'Liberation Sans', sans-serif;font-weight:400;color:#f4f4f4;white-space:pre;transform:scaleX(1.0116);transform-origin:0 0;-webkit-text-stroke:0.25px #f4f4f4;">Media(video) 0bo9eym</span>
<svg style="position:absolute;left:898.5px;top:1020px;" width="22" height="20" viewBox="0 0 22 20"><g fill="none" stroke="#f0f0f0" stroke-width="1.4"><rect x="1.5" y="7" width="19" height="11"/><rect x="1.5" y="2" width="19" height="5"/><path d="M5 2 L7.5 7 M9.5 2 L12 7 M14 2 L16.5 7 M18.5 2 L20.5 6"/></g></svg>
<span id="t80" style="position:absolute;left:929.30px;top:1022.05px;font-size:14.83px;line-height:14.83px;font-family:'Liberation Sans', sans-serif;font-weight:400;color:#f4f4f4;white-space:pre;transform:scaleX(1.0053);transform-origin:0 0;-webkit-text-stroke:0.25px #f4f4f4;">Media(video) 0rz9vml</span>
<svg style="position:absolute;left:1311px;top:1054px;overflow:hidden;" width="22" height="4" viewBox="0 0 22 4"><g fill="none" stroke="#f0f0f0" stroke-width="1.4"><rect x="1.5" y="7" width="19" height="11"/><rect x="1.5" y="2" width="19" height="5"/><path d="M5 2 L7.5 7 M9.5 2 L12 7 M14 2 L16.5 7 M18.5 2 L20.5 6"/></g></svg>
<div style="position:absolute;left:534px;top:972px;width:2.2px;height:86px;background:#e26060;"></div>
</body></html>
